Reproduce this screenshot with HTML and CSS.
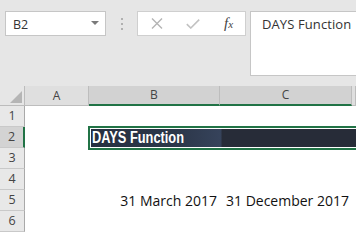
FILE: index.html
```html
<!DOCTYPE html>
<html lang="en">
<head>
    <meta charset="UTF-8">
    <meta name="viewport" content="width=device-width, initial-scale=1.0">
    <title>DAYS Function</title>
    <link rel="stylesheet" href="styles.css">
</head>
<body>
    <div class="toolbar">
        <div class="name-box">
            <span class="name">B2</span>
            <svg class="caret" width="8" height="4" viewBox="0 0 8 4"><polygon points="0,0 8,0 4,4" fill="#7a7a7a"/></svg>
        </div>
        <div class="grip"><i></i><i></i><i></i></div>
        <div class="fx-buttons">
            <svg class="icon" width="12" height="11" viewBox="0 0 12 11">
                <path d="M1 0.5 L11 10.5 M11 0.5 L1 10.5" stroke="#b4b4b4" stroke-width="1.4" fill="none"/>
            </svg>
            <svg class="icon" width="14" height="10" viewBox="0 0 14 10">
                <path d="M0.8 5.2 L4.8 9 L13.2 0.6" stroke="#c2c2c2" stroke-width="1.6" fill="none"/>
            </svg>
            <span class="fx">f<span class="fx-x">x</span></span>
        </div>
        <div class="formula">DAYS Function</div>
    </div>

    <div class="sheet">
        <div class="corner">
            <svg width="12" height="12" viewBox="0 0 12 12"><polygon points="12,0 12,12 0,12" fill="#b5b5b5"/></svg>
        </div>
        <div class="col-head">A</div>
        <div class="col-head active">B</div>
        <div class="col-head active">C</div>
        <div class="col-head"></div>

        <div class="row-head">1</div>
        <div class="cell"></div><div class="cell"></div><div class="cell"></div><div class="cell"></div>

        <div class="row-head active">2</div>
        <div class="cell"></div>
        <div class="selection">
            <div class="fill"><span class="title">DAYS Function</span></div>
        </div>

        <div class="row-head">3</div>
        <div class="cell"></div><div class="cell"></div><div class="cell"></div><div class="cell"></div>

        <div class="row-head">4</div>
        <div class="cell"></div><div class="cell"></div><div class="cell"></div><div class="cell"></div>

        <div class="row-head">5</div>
        <div class="cell"></div>
        <div class="cell date">31 March 2017</div>
        <div class="cell date">31 December 2017</div>
        <div class="cell"></div>

        <div class="row-head">6</div>
        <div class="cell"></div><div class="cell"></div><div class="cell"></div><div class="cell"></div>
    </div>
</body>
</html>
```

FILE: styles.css
```css
*{
    margin: 0;
    padding: 0;
    box-sizing: border-box;
}
body{
    width: 356px;
    height: 234px;
    overflow: hidden;
    background: #fff;
    font-family: "Open Sans", "Liberation Sans", sans-serif;
    color: #333;
}
.toolbar{
    height: 86px;
    background: #e6e6e6;
    display: flex;
    align-items: flex-start;
    padding: 11px 0 0 5px;
}
.name-box{
    width: 101px;
    height: 25px;
    background: #fff;
    border: 1px solid #c6c6c6;
    display: flex;
    align-items: center;
    justify-content: space-between;
    padding: 1px 6px 0 7px;
}
.name{
    font-size: 12.5px;
    color: #333;
}
.caret{
    margin-bottom: 2px;
}
.grip{
    width: 31px;
    height: 25px;
    display: flex;
    flex-direction: column;
    align-items: center;
    justify-content: center;
    gap: 3px;
}
.grip i{
    width: 2px;
    height: 2px;
    background: #b0b0b0;
}
.fx-buttons{
    width: 109px;
    height: 25px;
    background: #fff;
    border: 1px solid #cfcfcf;
    display: flex;
    align-items: center;
    padding: 0 10px 0 13px;
    gap: 23px;
}
.fx{
    font-family: "Liberation Serif", serif;
    font-style: italic;
    font-size: 15px;
    color: #444;
    margin-left: 1px;
}
.fx-x{
    font-size: 11px;
}
.formula{
    flex: 1;
    height: 65px;
    margin-left: 4px;
    background: #fff;
    border: 1px solid #c6c6c6;
    border-right: none;
    padding: 3px 0 0 11px;
    font-size: 13px;
    letter-spacing: 0.1px;
    color: #333;
    white-space: nowrap;
    overflow: hidden;
}
.sheet{
    display: grid;
    grid-template-columns: 25px 64px 131px 132px 1fr;
    grid-template-rows: 20px repeat(6, 21px);
}
.corner{
    background: #e6e6e6;
    border-right: 1px solid #bcbcbc;
    border-bottom: 1px solid #bcbcbc;
    display: flex;
    align-items: flex-end;
    justify-content: flex-end;
    padding: 0 2px 2px 0;
}
.col-head{
    background: #dfdfdf;
    border-right: 1px solid #bdbdbd;
    border-bottom: 1px solid #bdbdbd;
    font-size: 12px;
    color: #444;
    text-align: center;
    line-height: 19px;
    overflow: hidden;
}
.col-head.active{
    background: #d2d2d2;
    border-bottom: 2px solid #217346;
    line-height: 18px;
}
.row-head{
    background: #e8e8e8;
    border-right: 1px solid #a9a9a9;
    border-bottom: 1px solid #c9c9c9;
    font-size: 12.5px;
    color: #444;
    text-align: center;
    line-height: 20px;
}
.row-head.active{
    background: #d3d3d3;
    border-right: 2px solid #217346;
}
.cell{
    background: #fff;
}
.date{
    text-align: right;
    padding: 1px 3px 0 0;
    font-size: 14px;
    line-height: 20px;
    color: #111;
    white-space: nowrap;
}
.selection{
    grid-column: 3 / -1;
    position: relative;
    z-index: 1;
    margin: -1px 0 -2px -1px;
    border: 2px solid #217346;
    border-right: none;
    padding: 1px 0 1px 1px;
    background: #fff;
}
.fill{
    height: 100%;
    display: flex;
    align-items: center;
    background: linear-gradient(90deg, #262f40 0, #2d384b 90px, #36435b 130px, #272c38 131px, #272c38 100%);
    padding-left: 1px;
}
.title{
    font-family: "Liberation Sans", Arial, sans-serif;
    font-weight: bold;
    font-size: 16px;
    line-height: 18px;
    color: #fff;
    transform: scaleX(0.8);
    transform-origin: left center;
    white-space: nowrap;
}
```
